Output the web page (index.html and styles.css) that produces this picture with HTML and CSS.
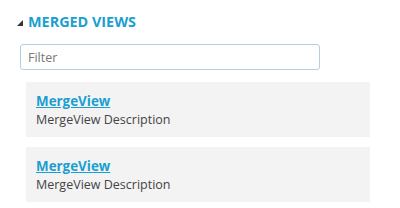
FILE: index.html
```html
<!DOCTYPE html>
<html lang="en">
<head>
  <meta charset="UTF-8">
  <title>Merged Views</title>
  <link rel="stylesheet" href="styles.css">
</head>
<body>
  <div class="panel">
    <div class="panel-title">
      <span class="caret"></span>
      <span>MERGED VIEWS</span>
    </div>
    <input class="filter" type="text" placeholder="Filter">
    <div class="view-list">
      <div class="view-card">
        <a class="view-link" href="#">MergeView</a>
        <div class="view-desc">MergeView Description</div>
      </div>
      <div class="view-card">
        <a class="view-link" href="#">MergeView</a>
        <div class="view-desc">MergeView Description</div>
      </div>
    </div>
  </div>
</body>
</html>
```

FILE: styles.css
```css
* { box-sizing: border-box; }
html, body {
  margin: 0;
  padding: 0;
  background: #fff;
  font-family: 'Open Sans', 'Noto Sans', sans-serif;
}

.panel {
  padding: 11px 0 0 17px;
}

.panel-title {
  display: flex;
  align-items: center;
  gap: 5px;
  font-size: 14.4px;
  font-weight: bold;
  color: #1a9fd0;
  height: 21px;
}

.caret {
  width: 0;
  height: 0;
  border-left: 6px solid transparent;
  border-bottom: 6px solid #333;
  margin-top: 3px;
}

.filter {
  display: block;
  margin: 12px 0 0 3px;
  width: 300px;
  height: 26px;
  border: 1px solid #b5d0dc;
  border-radius: 3px;
  padding: 0 7px;
  font-family: inherit;
  font-size: 12.5px;
  color: #333;
  outline: none;
}

.filter::placeholder {
  color: #777;
}

.view-list {
  display: flex;
  flex-direction: column;
  gap: 10px;
  margin: 12px 0 0 9px;
  width: 344px;
}

.view-card {
  background: #f3f3f3;
  height: 55px;
  padding: 10px 10px 0 10px;
}

.view-link {
  display: block;
  font-size: 13.4px;
  font-weight: bold;
  color: #1a9fd0;
  text-decoration: underline;
  line-height: 18px;
}

.view-desc {
  font-size: 12.5px;
  color: #444;
  line-height: 20px;
}
```
